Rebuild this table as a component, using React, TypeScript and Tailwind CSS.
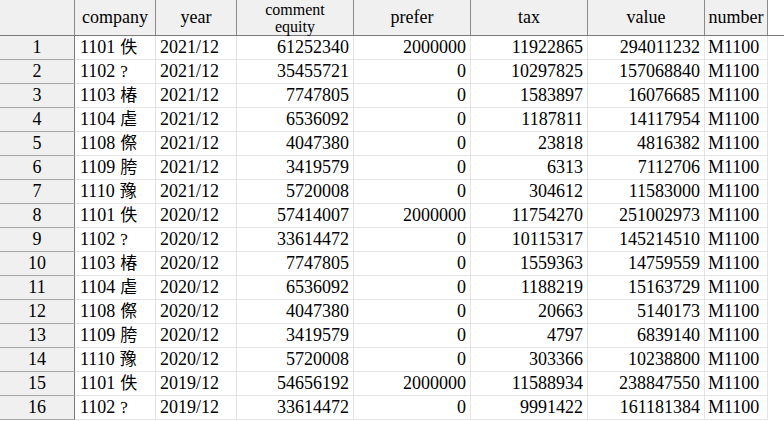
import React from 'react';

type Row = {
  id: string;
  ch: string;
  year: string;
  equity: number;
  prefer: number;
  tax: number;
  value: number;
  number: string;
};

const rows: Row[] = [
  { id: '1101', ch: '佚', year: '2021/12', equity: 61252340, prefer: 2000000, tax: 11922865, value: 294011232, number: 'M1100' },
  { id: '1102', ch: '?', year: '2021/12', equity: 35455721, prefer: 0, tax: 10297825, value: 157068840, number: 'M1100' },
  { id: '1103', ch: '椿', year: '2021/12', equity: 7747805, prefer: 0, tax: 1583897, value: 16076685, number: 'M1100' },
  { id: '1104', ch: '虐', year: '2021/12', equity: 6536092, prefer: 0, tax: 1187811, value: 14117954, number: 'M1100' },
  { id: '1108', ch: '傺', year: '2021/12', equity: 4047380, prefer: 0, tax: 23818, value: 4816382, number: 'M1100' },
  { id: '1109', ch: '胯', year: '2021/12', equity: 3419579, prefer: 0, tax: 6313, value: 7112706, number: 'M1100' },
  { id: '1110', ch: '豫', year: '2021/12', equity: 5720008, prefer: 0, tax: 304612, value: 11583000, number: 'M1100' },
  { id: '1101', ch: '佚', year: '2020/12', equity: 57414007, prefer: 2000000, tax: 11754270, value: 251002973, number: 'M1100' },
  { id: '1102', ch: '?', year: '2020/12', equity: 33614472, prefer: 0, tax: 10115317, value: 145214510, number: 'M1100' },
  { id: '1103', ch: '椿', year: '2020/12', equity: 7747805, prefer: 0, tax: 1559363, value: 14759559, number: 'M1100' },
  { id: '1104', ch: '虐', year: '2020/12', equity: 6536092, prefer: 0, tax: 1188219, value: 15163729, number: 'M1100' },
  { id: '1108', ch: '傺', year: '2020/12', equity: 4047380, prefer: 0, tax: 20663, value: 5140173, number: 'M1100' },
  { id: '1109', ch: '胯', year: '2020/12', equity: 3419579, prefer: 0, tax: 4797, value: 6839140, number: 'M1100' },
  { id: '1110', ch: '豫', year: '2020/12', equity: 5720008, prefer: 0, tax: 303366, value: 10238800, number: 'M1100' },
  { id: '1101', ch: '佚', year: '2019/12', equity: 54656192, prefer: 2000000, tax: 11588934, value: 238847550, number: 'M1100' },
  { id: '1102', ch: '?', year: '2019/12', equity: 33614472, prefer: 0, tax: 9991422, value: 161181384, number: 'M1100' },
];

const hdr = 'flex items-center justify-center bg-[#f0f0f0] border-r border-[#8a8a8a] text-center';
const cell = 'flex items-center border-r border-b border-[#e4e4e4] whitespace-nowrap';

const App: React.FC = () => {
  return (
    <div className="w-[784px] h-[421px] overflow-hidden bg-white text-black text-[18px] [font-family:'Liberation_Serif','DejaVu_Serif',serif]">
      <div className="flex h-[36px] border-b border-[#7a7a7a]">
        <div className={`${hdr} w-[75px]`} />
        <div className={`${hdr} w-[81px]`}>company</div>
        <div className={`${hdr} w-[81px]`}>year</div>
        <div className={`${hdr} w-[117px] flex-col text-[16px] leading-[17px]`}>
          <span>comment</span>
          <span>equity</span>
        </div>
        <div className={`${hdr} w-[117px]`}>prefer</div>
        <div className={`${hdr} w-[117px]`}>tax</div>
        <div className={`${hdr} w-[117px]`}>value</div>
        <div className={`${hdr} w-[63px]`}>number</div>
      </div>
      {rows.map((r, i) => (
        <div key={i} className="flex h-[24px]">
          <div className="flex w-[75px] items-center justify-center bg-[#f0f0f0] border-r border-b border-r-[#7a7a7a] border-b-[#a8a8a8]">
            {i + 1}
          </div>
          <div className={`${cell} w-[81px] pl-[5px]`}>
            {r.id}
            <span className="ml-[5px] text-[17px] [font-family:'Liberation_Serif','Noto_Sans_CJK_TC',serif]">{r.ch}</span>
          </div>
          <div className={`${cell} w-[81px] pl-[4px]`}>{r.year}</div>
          <div className={`${cell} w-[117px] justify-end pr-[4px]`}>{r.equity}</div>
          <div className={`${cell} w-[117px] justify-end pr-[4px]`}>{r.prefer}</div>
          <div className={`${cell} w-[117px] justify-end pr-[4px]`}>{r.tax}</div>
          <div className={`${cell} w-[117px] justify-end pr-[4px]`}>{r.value}</div>
          <div className={`${cell} w-[63px] pl-[3px]`}>{r.number}</div>
        </div>
      ))}
    </div>
  );
};

export default App;
